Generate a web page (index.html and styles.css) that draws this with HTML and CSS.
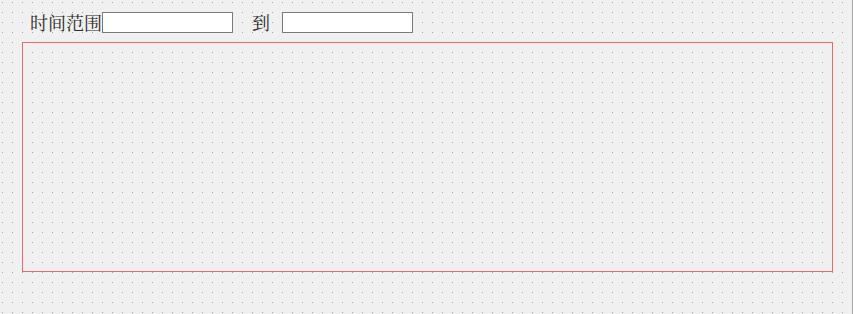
FILE: index.html
```html
<!DOCTYPE html>
<html lang="zh-CN">
<head>
<meta charset="utf-8">
<title>时间范围</title>
<link rel="stylesheet" href="styles.css">
</head>
<body>
<div class="canvas">
  <div class="range-row">
    <span class="label label-range">时间范围</span>
    <input class="field" type="text">
    <span class="label label-to">到</span>
    <input class="field" type="text">
  </div>
  <div class="frame"></div>
</div>
</body>
</html>
```
FILE: styles.css
```css
html, body {
  margin: 0;
  padding: 0;
  background: #f0f0f0;
}

.canvas {
  box-sizing: border-box;
  width: 853px;
  height: 314px;
  border-right: 1px solid #a8a8a8;
  background-color: #a2a2a2;
  background-image:
    linear-gradient(to right, #f0f0f0 2px, transparent 2px, transparent 3px, #f0f0f0 3px),
    linear-gradient(to bottom, #f0f0f0 2px, transparent 2px, transparent 3px, #f0f0f0 3px);
  background-size: 10px 10px;
  overflow: hidden;
}

.range-row {
  display: flex;
  align-items: center;
  padding: 12px 0 0 30px;
  height: 21px;
}

.label {
  font-family: "Noto Serif CJK SC", "Noto Sans CJK SC", serif;
  font-size: 18px;
  line-height: 21px;
  color: #2a2a2a;
  white-space: nowrap;
}

.label-range {
  width: 72px;
}

.label-to {
  margin: 0 12px 0 19px;
  width: 18px;
}

.field {
  box-sizing: border-box;
  width: 131px;
  height: 21px;
  margin: 0;
  padding: 0 2px;
  border: 1px solid #7a7a7a;
  border-radius: 0;
  background: #ffffff;
  outline: none;
}

.frame {
  box-sizing: border-box;
  width: 811px;
  height: 230px;
  margin: 9px 0 0 22px;
  border: 1px solid #e36d6d;
}
```
